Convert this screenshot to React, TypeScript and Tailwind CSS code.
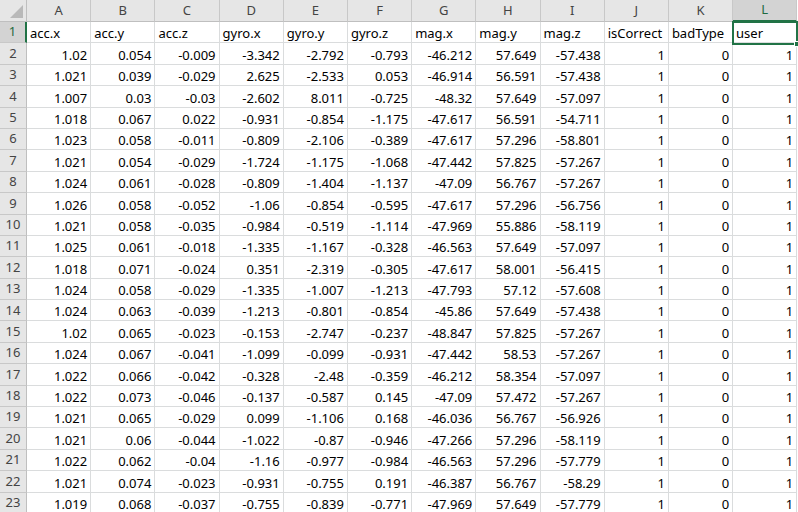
import React from 'react';

const COLUMNS = ['A', 'B', 'C', 'D', 'E', 'F', 'G', 'H', 'I', 'J', 'K', 'L'];

const HEADERS = ['acc.x', 'acc.y', 'acc.z', 'gyro.x', 'gyro.y', 'gyro.z', 'mag.x', 'mag.y', 'mag.z', 'isCorrect', 'badType', 'user'];

// sensor readings, rows 2..23
const ROWS: string[][] = [
  ['1.02', '0.054', '-0.009', '-3.342', '-2.792', '-0.793', '-46.212', '57.649', '-57.438'],
  ['1.021', '0.039', '-0.029', '2.625', '-2.533', '0.053', '-46.914', '56.591', '-57.438'],
  ['1.007', '0.03', '-0.03', '-2.602', '8.011', '-0.725', '-48.32', '57.649', '-57.097'],
  ['1.018', '0.067', '0.022', '-0.931', '-0.854', '-1.175', '-47.617', '56.591', '-54.711'],
  ['1.023', '0.058', '-0.011', '-0.809', '-2.106', '-0.389', '-47.617', '57.296', '-58.801'],
  ['1.021', '0.054', '-0.029', '-1.724', '-1.175', '-1.068', '-47.442', '57.825', '-57.267'],
  ['1.024', '0.061', '-0.028', '-0.809', '-1.404', '-1.137', '-47.09', '56.767', '-57.267'],
  ['1.026', '0.058', '-0.052', '-1.06', '-0.854', '-0.595', '-47.617', '57.296', '-56.756'],
  ['1.021', '0.058', '-0.035', '-0.984', '-0.519', '-1.114', '-47.969', '55.886', '-58.119'],
  ['1.025', '0.061', '-0.018', '-1.335', '-1.167', '-0.328', '-46.563', '57.649', '-57.097'],
  ['1.018', '0.071', '-0.024', '0.351', '-2.319', '-0.305', '-47.617', '58.001', '-56.415'],
  ['1.024', '0.058', '-0.029', '-1.335', '-1.007', '-1.213', '-47.793', '57.12', '-57.608'],
  ['1.024', '0.063', '-0.039', '-1.213', '-0.801', '-0.854', '-45.86', '57.649', '-57.438'],
  ['1.02', '0.065', '-0.023', '-0.153', '-2.747', '-0.237', '-48.847', '57.825', '-57.267'],
  ['1.024', '0.067', '-0.041', '-1.099', '-0.099', '-0.931', '-47.442', '58.53', '-57.267'],
  ['1.022', '0.066', '-0.042', '-0.328', '-2.48', '-0.359', '-46.212', '58.354', '-57.097'],
  ['1.022', '0.073', '-0.046', '-0.137', '-0.587', '0.145', '-47.09', '57.472', '-57.267'],
  ['1.021', '0.065', '-0.029', '0.099', '-1.106', '0.168', '-46.036', '56.767', '-56.926'],
  ['1.021', '0.06', '-0.044', '-1.022', '-0.87', '-0.946', '-47.266', '57.296', '-58.119'],
  ['1.022', '0.062', '-0.04', '-1.16', '-0.977', '-0.984', '-46.563', '57.296', '-57.779'],
  ['1.021', '0.074', '-0.023', '-0.931', '-0.755', '0.191', '-46.387', '56.767', '-58.29'],
  ['1.019', '0.068', '-0.037', '-0.755', '-0.839', '-0.771', '-47.969', '57.649', '-57.779'],
].map((r) => [...r, '1', '0', '1']);

const Corner = () => (
  <div className="relative border-r border-b border-[#bfbfbf] bg-[#e6e6e6]">
    <svg className="absolute right-[3px] bottom-[3px]" width="13" height="13" viewBox="0 0 13 13">
      <polygon points="13,0 13,13 0,13" fill="#b9b9b9" />
    </svg>
  </div>
);

const ColHeader = ({ label, active }: { label: string; active?: boolean }) => (
  <div
    className={`flex items-center justify-center border-r border-[#c8c8c8] text-[13px] ${
      active
        ? 'bg-[#d3d3d3] text-[#1e6b40] border-b-2 border-b-[#217346]'
        : 'bg-[#e6e6e6] text-[#444] border-b border-b-[#bfbfbf]'
    }`}
  >
    {label}
  </div>
);

const RowHeader = ({ label, active }: { label: number; active?: boolean }) => (
  <div
    className={`flex items-center justify-center border-b border-[#c8c8c8] text-[13px] ${
      active
        ? 'bg-[#d3d3d3] text-[#1e6b40] border-r-2 border-r-[#217346]'
        : 'bg-[#e6e6e6] text-[#444] border-r border-r-[#bfbfbf]'
    }`}
  >
    {label}
  </div>
);

const Cell = ({ value, left }: { value: string; left?: boolean }) => (
  <div
    className={`flex items-end overflow-hidden whitespace-nowrap border-r border-b border-[#dadcdd] bg-white px-[3px] text-[13px] leading-[17px] text-black ${
      left ? 'justify-start' : 'justify-end'
    }`}
  >
    {value}
  </div>
);

export default function App() {
  return (
    <div className="h-[512px] w-[798px] overflow-hidden bg-white font-['Noto_Sans',sans-serif]">
      <div className="relative grid grid-cols-[27px_repeat(12,64.2px)] grid-rows-[22px_repeat(23,21.4px)]">
        <Corner />
        {COLUMNS.map((c) => (
          <ColHeader key={c} label={c} active={c === 'L'} />
        ))}

        <RowHeader label={1} active />
        {HEADERS.map((h) => (
          <Cell key={h} value={h} left />
        ))}

        {ROWS.map((row, i) => (
          <React.Fragment key={i}>
            <RowHeader label={i + 2} />
            {row.map((v, j) => (
              <Cell key={j} value={v} />
            ))}
          </React.Fragment>
        ))}

        {/* active cell L1 */}
        <div className="pointer-events-none absolute left-[732px] top-[21px] h-[24px] w-[66px] border-2 border-[#217346]">
          <div className="absolute -right-[4px] -bottom-[4px] h-[6px] w-[6px] border border-white bg-[#217346]" />
        </div>
      </div>
    </div>
  );
}
